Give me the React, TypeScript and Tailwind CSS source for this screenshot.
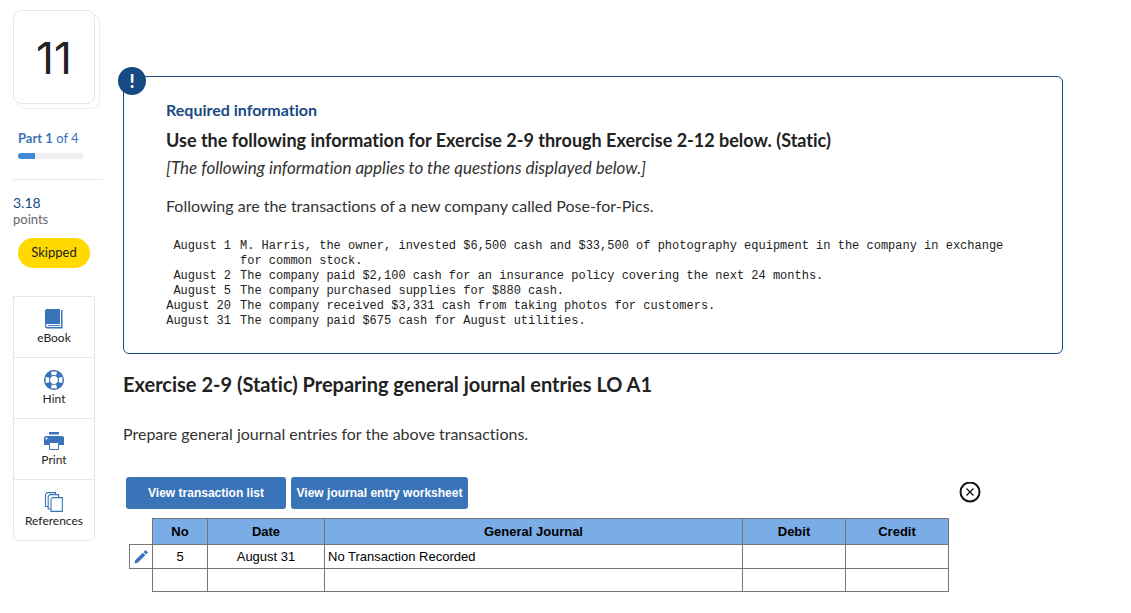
import React from "react";

const transactions = [
  { date: "August 1", text: "M. Harris, the owner, invested $6,500 cash and $33,500 of photography equipment in the company in exchange for common stock." },
  { date: "August 2", text: "The company paid $2,100 cash for an insurance policy covering the next 24 months." },
  { date: "August 5", text: "The company purchased supplies for $880 cash." },
  { date: "August 20", text: "The company received $3,331 cash from taking photos for customers." },
  { date: "August 31", text: "The company paid $675 cash for August utilities." },
];

function BookIcon() {
  return (
    <svg viewBox="0 0 20 20" className="size-5" aria-hidden="true">
      <path d="M3 0H16V15H3.5C2.6 15 2 15.5 2 16.3S2.6 18 3.5 18H17V1H18.5V19.5H3.5C1.7 19.5 1 18.2 1 17V2C1 .8 1.800 0 3 0Z" fill="#3a74b8" />
      <path d="M4 16.600H16" stroke="#3a74b8" strokeWidth="1" />
    </svg>
  );
}

function HintIcon() {
  return (
    <svg viewBox="0 0 20 20" className="size-5" fill="none" aria-hidden="true">
      <circle cx="10" cy="10" r="7" stroke="#3a74b8" strokeWidth="5.600" />
      <path d="M8 6L6.800 1.300H13.200L12 6ZM8 14L6.800 18.700H13.200L12 14ZM6 8L1.300 6.800V13.200L6 12ZM14 8L18.700 6.800V13.200L14 12Z" fill="#fff" />
      <circle cx="10" cy="10" r="9.300" stroke="#3a74b8" strokeWidth="1.200" />
      <circle cx="10" cy="10" r="4.500" stroke="#3a74b8" strokeWidth="1.100" />
    </svg>
  );
}

function PrintIcon() {
  return (
    <svg viewBox="0 0 20 20" className="size-5" aria-hidden="true">
      <path d="M5 1H15V3.500H5Z" fill="#3a74b8" />
      <path d="M2 5H18C19.200 5 20 5.800 20 7V14H15V11H5V14H0V7C0 5.800.8 5 2 5Z" fill="#3a74b8" />
      <path d="M5.500 11.500H14.500V18.500H5.500Z" fill="#fff" stroke="#3a74b8" />
      <circle cx="2.500" cy="7.500" r="1" fill="#fff" />
    </svg>
  );
}

function ReferencesIcon() {
  return (
    <svg viewBox="0 0 20 20" className="size-5" fill="#fff" stroke="#3a74b8" strokeWidth="1.100" aria-hidden="true">
      <path d="M1.500 2.500V14.500H11.500V.6H3.200Z" />
      <path d="M4.200 4.500V17H14.500V2.600H6Z" />
      <path d="M7 7.200V19.400H18.300V5.600H8.600Z" />
    </svg>
  );
}

const tools = [
  { label: "eBook", icon: <BookIcon /> },
  { label: "Hint", icon: <HintIcon /> },
  { label: "Print", icon: <PrintIcon /> },
  { label: "References", icon: <ReferencesIcon /> },
];

function Sidebar() {
  return (
    <aside className="w-[110px] shrink-0 text-[13px]">
      <div className="relative mb-[21px] h-[98px] w-[87px]">
        <div className="absolute top-1 left-1 h-[95px] w-[83px] rounded-lg border border-[#ececec]" />
        <div className="relative flex h-[94px] w-[82px] items-center justify-center rounded-lg border border-[#e6e6e6] bg-white pt-0.5 font-['Inter',sans-serif] text-[44px]">
          11
        </div>
      </div>
      <div className="ml-[5px] w-[66px] text-[#3a74b8]">
        <p className="leading-[18px]"><strong>Part 1</strong> of 4</p>
        <div className="mt-1.5 h-1.5 overflow-hidden rounded-full bg-[#f0f0f0]">
          <div className="h-full w-1/4 bg-[#4189d0]" />
        </div>
      </div>
      <hr className="mt-5 mr-5 mb-[15px] border-[#e8e8e8]" />
      <p className="text-sm leading-4 text-[#174a82]">3.18</p>
      <p className="leading-4 text-[#666]">points</p>
      <div className="mt-[11px] ml-[5px] flex h-[30px] w-[72px] items-center justify-center rounded-full bg-[#ffd900]">Skipped</div>
      <nav className="mt-7 w-[82px] rounded-b-md border border-[#e6e6e6]">
        {tools.map((tool) => (
          <button key={tool.label} type="button" className="flex h-[61px] w-full flex-col items-center gap-px border-b border-[#e6e6e6] pt-3 text-xs leading-4 last:h-[60px] last:border-b-0">
            {tool.icon}
            {tool.label}
          </button>
        ))}
      </nav>
    </aside>
  );
}

function RequiredInformation() {
  return (
    <section className="relative rounded-md border border-[#174a82] px-[42px] pt-[23px] pb-6">
      <div className="absolute -top-2.5 -left-1.5 flex size-7 items-center justify-center rounded-full bg-[#174a82] text-lg font-black text-white">!</div>
      <h3 className="text-base leading-5 font-bold text-[#174a82]">Required information</h3>
      <h2 className="mt-2 text-lg leading-6 font-bold">Use the following information for Exercise 2-9 through Exercise 2-12 below. (Static)</h2>
      <p className="mt-1 text-[17px] leading-6 text-[#333] italic">[The following information applies to the questions displayed below.]</p>
      <p className="mt-3.5 text-base leading-6 text-[#333]">Following are the transactions of a new company called Pose-for-Pics.</p>
      <table className="mt-[21px] font-['Liberation_Mono','Courier_New',monospace] text-[12px] leading-[15px]">
        <tbody>
          {transactions.map((item) => (
            <tr key={item.date} className="align-top">
              <td className="w-[74px] p-0 pr-[9px] text-right whitespace-nowrap">{item.date}</td>
              <td className="p-0">{item.text}</td>
            </tr>
          ))}
        </tbody>
      </table>
    </section>
  );
}

function Journal() {
  return (
    <section className="mt-[31px] max-w-[858px] pl-[3px] font-['Liberation_Sans',Arial,sans-serif] text-black">
      <div className="flex items-center gap-[5px]">
        <button type="button" className="h-8 w-40 rounded-[3px] bg-[#3a74b8] text-xs font-bold text-white">View transaction list</button>
        <button type="button" className="h-8 w-[177px] rounded-[3px] bg-[#3a74b8] text-xs font-bold whitespace-nowrap text-white">View journal entry worksheet</button>
        <button type="button" aria-label="Close" className="ml-auto">
          <svg viewBox="0 0 22 22" className="size-[22px]" fill="none" stroke="#111" aria-hidden="true">
            <circle cx="11" cy="10" r="9.500" strokeWidth="2" />
            <path d="M7.500 6.500L14.500 13.500M14.500 6.500L7.500 13.500" strokeWidth="1.300" />
          </svg>
        </button>
      </div>
      <div className="mt-[9px] pr-8 pl-[3px]">
        <table className="w-full table-fixed border-collapse text-[13px] leading-4">
          <colgroup>
            <col className="w-[23px]" />
            <col className="w-[55px]" />
            <col className="w-[117px]" />
            <col />
            <col className="w-[103px]" />
            <col className="w-[103px]" />
          </colgroup>
          <thead>
            <tr className="h-[26px]">
              <td />
              <th scope="col" className="border border-[#777] bg-[#7aace5]">No</th>
              <th scope="col" className="border border-[#777] bg-[#7aace5]">Date</th>
              <th scope="col" className="border border-[#777] bg-[#7aace5]">General Journal</th>
              <th scope="col" className="border border-[#777] bg-[#7aace5]">Debit</th>
              <th scope="col" className="border border-[#777] bg-[#7aace5]">Credit</th>
            </tr>
          </thead>
          <tbody>
            <tr className="h-6">
              <td className="border border-[#777] p-0">
                <button type="button" aria-label="Edit entry" className="flex w-full justify-center">
                  <svg viewBox="0 0 14 14" className="size-3.5" fill="#3a74b8" aria-hidden="true">
                    <path d="M.5 13.500L1.200 10.300L8.800 2.700L11.300 5.200L3.700 12.800ZM9.500 2L11 .5Q11.500 0 12 .5L13.500 2Q14 2.500 13.500 3L12 4.500Z" />
                  </svg>
                </button>
              </td>
              <td className="border border-[#777] p-0 text-center">5</td>
              <td className="border border-[#777] p-0 text-center">August 31</td>
              <td className="border border-[#777] p-0 pl-[3px]">No Transaction Recorded</td>
              <td className="border border-[#777]" />
              <td className="border border-[#777]" />
            </tr>
            <tr className="h-[23px]">
              <td />
              <td className="border border-[#777]" />
              <td className="border border-[#777]" />
              <td className="border border-[#777]" />
              <td className="border border-[#777]" />
              <td className="border border-[#777]" />
            </tr>
          </tbody>
        </table>
      </div>
    </section>
  );
}

export default function App() {
  return (
    <div className="flex min-h-screen bg-white pt-2.5 pl-[13px] font-['Lato',sans-serif] text-[#222] [font-variant-ligatures:none]">
      <Sidebar />
      <main className="min-w-0 flex-1 pt-[66px] pr-[68px] pb-5">
        <RequiredInformation />
        <h1 className="mt-[18px] text-xl leading-6 font-bold">Exercise 2-9 (Static) Preparing general journal entries LO A1</h1>
        <p className="mt-[26px] text-base leading-6 text-[#333]">Prepare general journal entries for the above transactions.</p>
        <Journal />
      </main>
    </div>
  );
}
